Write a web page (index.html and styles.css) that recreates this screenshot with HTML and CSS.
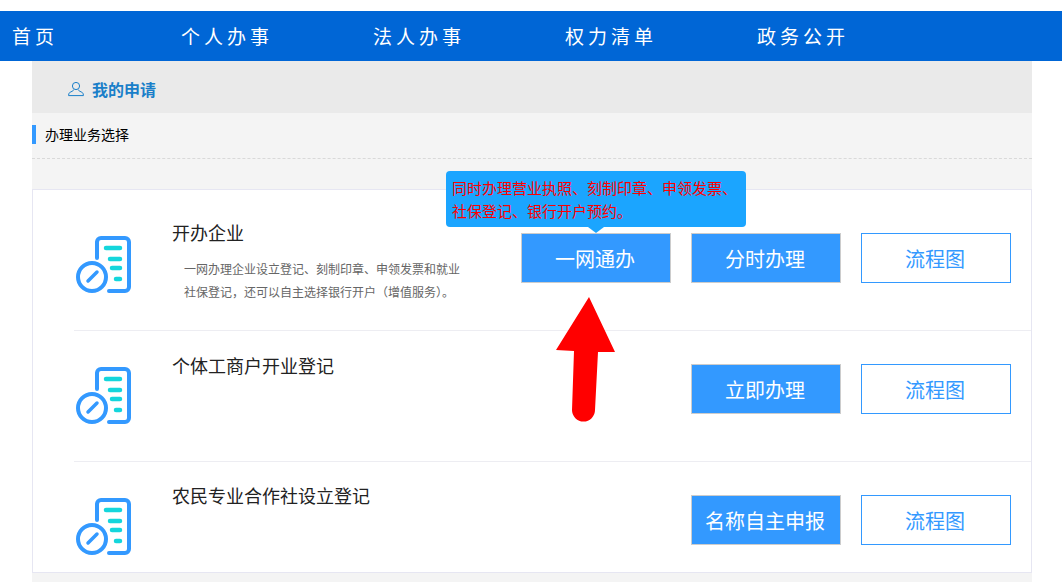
FILE: index.html
```html
<!DOCTYPE html>
<html lang="zh-CN">
<head>
    <meta charset="UTF-8">
    <title>我的申请</title>
    <link rel="stylesheet" href="styles.css">
</head>
<body>
    <nav class="main-nav">
        <a class="nav-item nav-home">首页</a>
        <a class="nav-item">个人办事</a>
        <a class="nav-item">法人办事</a>
        <a class="nav-item">权力清单</a>
        <a class="nav-item">政务公开</a>
    </nav>
    <div class="page">
        <div class="page-header">
            <svg class="user-icon" viewBox="0 0 16 16" width="16" height="16">
                <circle cx="8" cy="5" r="3.6"/>
                <path d="M5.8 8.6C5.6 10 3 10.6 1.6 11.6 .8 12.2 .6 13.2 .6 14.6h14.8c0-1.4-.2-2.4-1-3-1.4-1-4-1.6-4.2-3"/>
            </svg>
            <span>我的申请</span>
        </div>
        <div class="section-title"><span class="section-label">办理业务选择</span></div>
        <div class="card">
            <div class="row row-first">
                <svg class="row-icon" viewBox="0 0 56 58" width="56" height="58"><use href="#doc-icon"/></svg>
                <div class="row-text">
                    <h3>开办企业</h3>
                    <p>一网办理企业设立登记、刻制印章、申领发票和就业<br>社保登记，还可以自主选择银行开户（增值服务）。</p>
                </div>
                <div class="row-actions">
                    <div class="btn-wrap">
                        <div class="tooltip">同时办理营业执照、刻制印章、申领发票、社保登记、银行开户预约。</div>
                        <a class="btn btn-solid">一网通办</a>
                    </div>
                    <a class="btn btn-solid">分时办理</a>
                    <a class="btn btn-outline">流程图</a>
                </div>
                <svg class="arrow" viewBox="0 0 60 125" width="60" height="125">
                    <path d="M33 0 59 55 42 55 39 113A11.5 11.5 0 0 1 16 113L18 54 0 53Z" fill="#ff0000"/>
                </svg>
            </div>
            <div class="row row-second">
                <svg class="row-icon" viewBox="0 0 56 58" width="56" height="58"><use href="#doc-icon"/></svg>
                <div class="row-text"><h3>个体工商户开业登记</h3></div>
                <div class="row-actions">
                    <a class="btn btn-solid">立即办理</a>
                    <a class="btn btn-outline">流程图</a>
                </div>
            </div>
            <div class="row row-third">
                <svg class="row-icon" viewBox="0 0 56 58" width="56" height="58"><use href="#doc-icon"/></svg>
                <div class="row-text"><h3>农民专业合作社设立登记</h3></div>
                <div class="row-actions">
                    <a class="btn btn-solid">名称自主申报</a>
                    <a class="btn btn-outline">流程图</a>
                </div>
            </div>
        </div>
    </div>

    <svg class="icon-defs" width="0" height="0">
        <defs>
            <g id="doc-icon">
                <path d="M21 22V6a4 4 0 0 1 4-4H49a4 4 0 0 1 4 4V51a4 4 0 0 1-4 4H33" fill="none" stroke="#3399ff" stroke-width="4" stroke-linecap="round"/>
                <circle cx="16" cy="41" r="14" fill="#fff" stroke="#3399ff" stroke-width="4"/>
                <path d="M12 45 21 36" stroke="#3399ff" stroke-width="3.5" stroke-linecap="round"/>
                <path d="M30 12H44M34 23H44M36 32H44M40 43H44" stroke="#14d6dc" stroke-width="4.5" stroke-linecap="round"/>
            </g>
        </defs>
    </svg>
</body>
</html>
```

FILE: styles.css
```css
* {
    margin: 0;
    padding: 0;
    box-sizing: border-box;
}

body {
    font-family: "Noto Sans CJK SC", "Liberation Sans", sans-serif;
    background-color: #fff;
    color: #000;
    padding-top: 11px;
    height: 582px;
    overflow: hidden;
}

.main-nav {
    display: flex;
    height: 50px;
    padding-left: 12px;
    padding-bottom: 2px;
    background-color: #0066d6;
    align-items: center;
}

.nav-item {
    width: 192px;
    color: #fff;
    font-size: 19px;
    letter-spacing: 4px;
}

.nav-home {
    width: 169px;
}

.page {
    width: 1000px;
    margin-left: 32px;
    height: 521px;
    background-color: #f4f4f4;
}

.page-header {
    display: flex;
    align-items: center;
    height: 52px;
    padding-left: 36px;
    padding-top: 4px;
    background-color: #eaeaea;
    color: #1a7fc9;
    font-size: 16px;
    font-weight: 700;
}

.user-icon {
    margin-right: 8px;
    fill: none;
    stroke: #1a7fc9;
    stroke-width: 1;
}

.section-title {
    height: 46px;
    padding-top: 12px;
    border-bottom: 1px dashed #d9d9d9;
}

.section-label {
    display: block;
    height: 19px;
    padding-left: 9px;
    border-left: 4px solid #3399ff;
    font-size: 14px;
    line-height: 19px;
}

.card {
    margin-top: 30px;
    height: 384px;
    background-color: #fff;
    border: 1px solid #e6e6f2;
}

.row {
    display: flex;
    align-items: flex-start;
    position: relative;
    margin-left: 41px;
    padding-top: 33px;
    border-bottom: 1px solid #ededf2;
}

.row-first {
    height: 141px;
    padding-top: 43px;
}

.row-second {
    height: 131px;
}

.row-third {
    height: 110px;
    border-bottom: none;
}

.row-icon {
    flex: none;
    margin-top: 3px;
    margin-left: 2px;
}

.row-text {
    flex: 1;
    margin-left: 40px;
    margin-top: -12px;
}

.row-first .row-text {
    margin-top: -14px;
}

.row-third .row-text {
    margin-top: -13px;
}

.row-text h3 {
    font-size: 18px;
    font-weight: 400;
    line-height: 26px;
    color: #222;
}

.row-text p {
    margin-top: 12px;
    padding-left: 12px;
    font-size: 12px;
    line-height: 23px;
    color: #666;
}

.row-actions {
    display: flex;
    gap: 20px;
    margin-right: 20px;
}

.btn-wrap {
    position: relative;
}

.btn {
    display: flex;
    align-items: center;
    justify-content: center;
    width: 150px;
    height: 50px;
    padding-right: 2px;
    font-size: 20px;
}

.btn-solid {
    background-color: #3399ff;
    border: 1px solid #cccccc;
    color: #fff;
}

.btn-outline {
    background-color: #fff;
    border: 1px solid #3399ff;
    color: #3399ff;
}

.tooltip {
    position: absolute;
    left: -75px;
    bottom: 56px;
    width: 300px;
    height: 56px;
    padding: 5px 6px;
    background-color: #1ba5ff;
    border-radius: 4px;
    color: #ff0000;
    font-size: 15px;
    line-height: 23px;
}

.tooltip::after {
    content: "";
    position: absolute;
    left: 142px;
    bottom: -6px;
    border-top: 6px solid #1ba5ff;
    border-left: 8px solid transparent;
    border-right: 8px solid transparent;
}

.arrow {
    position: absolute;
    left: 482px;
    top: 107px;
    z-index: 2;
}

.icon-defs {
    position: absolute;
}
```
